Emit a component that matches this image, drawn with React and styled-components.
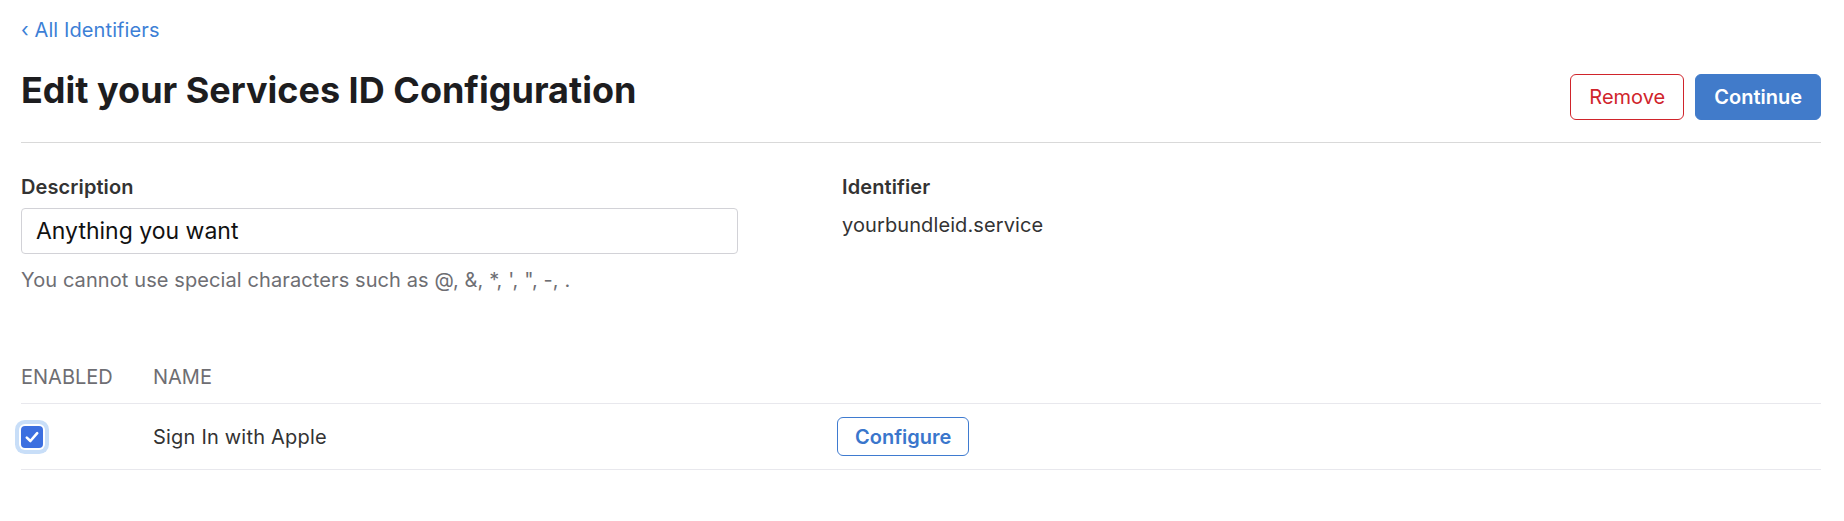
import React from 'react'
import styled, { createGlobalStyle } from 'styled-components'

const GlobalStyle = createGlobalStyle`
  body {
    margin: 0;
    background: #fff;
    font-family: Inter, "Noto Sans", "Liberation Sans", sans-serif;
    color: #333;
  }
`;

const services = [
  { id: 'siwa', name: 'Sign In with Apple', enabled: true },
];

const App = () => {
  return (
    <>
      <GlobalStyle />
      <Page>
        <BackLink href="#">‹ All Identifiers</BackLink>
        <Header>
          <Title>Edit your Services ID Configuration</Title>
          <Actions>
            <Button variant="danger">Remove</Button>
            <Button variant="primary">Continue</Button>
          </Actions>
        </Header>

        <Fields>
          <Field>
            <Label>Description</Label>
            <TextInput defaultValue="Anything you want" />
            <Hint>You cannot use special characters such as @, &amp;, *, ', ", -, .</Hint>
          </Field>
          <Field>
            <Label>Identifier</Label>
            <Value>yourbundleid.service</Value>
          </Field>
        </Fields>

        <Table>
          <thead>
            <tr>
              <Th width="132px">Enabled</Th>
              <Th width="684px">Name</Th>
              <Th />
            </tr>
          </thead>
          <tbody>
            {services.map((s) => (
              <tr key={s.id}>
                <Td>
                  <Check checked={s.enabled}>
                    <svg width="22" height="22" viewBox="0 0 22 22">
                      <path d="M5.8 11.6 L9.4 15 L16.2 7.2" fill="none" stroke="#fff" strokeWidth="2.6" strokeLinecap="round" strokeLinejoin="round" />
                    </svg>
                  </Check>
                </Td>
                <Td>{s.name}</Td>
                <Td>
                  <Button variant="outline" small>Configure</Button>
                </Td>
              </tr>
            ))}
          </tbody>
        </Table>
      </Page>
    </>
  )
}

export default App

const Page = styled.div`
  padding: 18px 23px 40px 21px;
`;

const BackLink = styled.a`
  display: block;
  color: #3d7fd6;
  font-size: 20px;
  line-height: 24px;
  letter-spacing: 0.1px;
  text-decoration: none;
`;

const Header = styled.div`
  display: flex;
  justify-content: space-between;
  align-items: flex-start;
  margin-top: 27px;
  padding-bottom: 22px;
  border-bottom: 1px solid #d9d9d9;
`;

const Title = styled.h1`
  margin: 0;
  color: #1d1d1f;
  font-size: 36px;
  font-weight: 700;
  line-height: 42px;
  letter-spacing: 0;
`;

const Actions = styled.div`
  display: flex;
  gap: 11px;
  margin-top: 5px;
`;

const Button = styled.button`
  box-sizing: border-box;
  height: ${(p) => (p.small ? '39px' : '46px')};
  padding: 0 ${(p) => (p.small ? '17px' : '18px')};
  border-radius: 6px;
  font-family: inherit;
  font-size: 20px;
  font-weight: ${(p) => (p.variant === 'danger' ? 400 : 600)};
  cursor: pointer;
  border: 1px solid
    ${(p) => (p.variant === 'danger' ? '#d0242b' : p.variant === 'outline' ? '#3f7bd0' : '#417bca')};
  background: ${(p) => (p.variant === 'primary' ? '#417bca' : '#fff')};
  color: ${(p) => (p.variant === 'primary' ? '#fff' : p.variant === 'danger' ? '#d0242b' : '#3a76cc')};
`;

const Fields = styled.div`
  display: grid;
  grid-template-columns: 717px 1fr;
  column-gap: 104px;
  margin-top: 32px;
`;

const Field = styled.div`
  display: flex;
  flex-direction: column;
`;

const Label = styled.div`
  font-size: 20px;
  line-height: 24px;
  font-weight: 600;
  letter-spacing: 0.1px;
  color: #333;
`;

const TextInput = styled.input`
  box-sizing: border-box;
  height: 46px;
  margin-top: 9px;
  padding: 0 14px;
  border: 1px solid #d2d2d7;
  border-radius: 4px;
  font-family: inherit;
  font-size: 23px;
  color: #111;
  outline: none;
`;

const Hint = styled.div`
  margin-top: 14px;
  font-size: 20px;
  line-height: 24px;
  letter-spacing: 0.1px;
  color: #6e6e73;
`;

const Value = styled.div`
  margin-top: 14px;
  font-size: 20px;
  line-height: 24px;
  letter-spacing: 0.1px;
  color: #333;
`;

const Table = styled.table`
  width: 100%;
  margin-top: 73px;
  border-collapse: collapse;
`;

const Th = styled.th`
  width: ${(p) => p.width || 'auto'};
  padding: 0 0 14px;
  text-align: left;
  font-size: 20px;
  line-height: 24px;
  font-weight: 400;
  text-transform: uppercase;
  color: #6e6e73;
  border-bottom: 1px solid #e8e8ed;
`;

const Td = styled.td`
  height: 65px;
  padding: 0;
  font-size: 20px;
  line-height: 24px;
  letter-spacing: 0.2px;
  color: #333;
  vertical-align: middle;
  border-bottom: 1px solid #e8e8ed;
`;

const Check = styled.span`
  display: flex;
  width: 22px;
  height: 22px;
  border-radius: 4px;
  background: ${(p) => (p.checked ? '#3c6fe0' : '#fff')};
  box-shadow: 0 0 0 2px #fff, 0 0 0 6px #c8def8;
`;
